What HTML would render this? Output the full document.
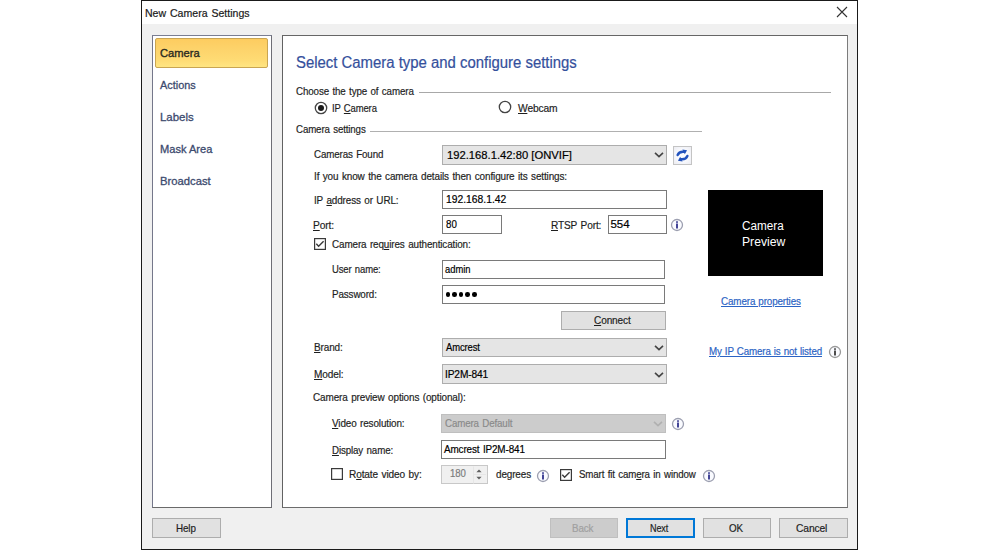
<!DOCTYPE html>
<html><head><meta charset="utf-8"><style>
html,body{margin:0;padding:0;width:1000px;height:550px;overflow:hidden;background:#fff;}
body{position:relative;font-family:"Liberation Sans",sans-serif;}
.t{position:absolute;white-space:nowrap;line-height:normal;transform-origin:0 0;}
.b{position:absolute;}
u{text-decoration:underline;}
</style></head><body>
<div class="b" style="left:141px;top:0px;width:717px;height:550px;background:#f0f0f0;border:1px solid #1a1a1a;box-sizing:border-box;"></div>
<div class="b" style="left:142px;top:1px;width:715px;height:23px;background:#fff;"></div>
<div class="t" style="left:145.40px;top:6.65px;font-size:11px;color:#1a1a1a;letter-spacing:0.000px;word-spacing:1.0px;transform:scaleX(0.9590);-webkit-text-stroke:0.2px #1a1a1a;">New Camera Settings</div>
<svg class="b" style="left:836px;top:6px" width="12" height="12" viewBox="0 0 12 12"><path d="M1 1 L11 11 M11 1 L1 11" stroke="#333" stroke-width="1.1"/></svg>
<div class="b" style="left:152px;top:35px;width:120px;height:473px;background:#fff;border:1px solid #6e7080;border-color:#7a7e92 #6e6e76 #6a6a6a #74778a;box-sizing:border-box;"></div>
<div class="b" style="left:155px;top:38px;width:113px;height:29.5px;background:linear-gradient(#fdcc60,#fdd46c 40%,#fedb74 75%,#ffe582);border:1px solid #c9a552;border-radius:2px;box-sizing:border-box;"></div>
<div class="t" style="left:159.75px;top:46.89px;font-size:11.5px;color:#2a2a20;letter-spacing:0.000px;word-spacing:0px;transform:scaleX(0.9697);-webkit-text-stroke:0.35px #2a2a20;">Camera</div>
<div class="t" style="left:159.75px;top:78.79px;font-size:11.5px;color:#3c4a6e;letter-spacing:0.000px;word-spacing:0px;transform:scaleX(0.9483);-webkit-text-stroke:0.3px #3c4a6e;">Actions</div>
<div class="t" style="left:160.00px;top:111.09px;font-size:11.5px;color:#3c4a6e;letter-spacing:0.000px;word-spacing:0px;transform:scaleX(0.9960);-webkit-text-stroke:0.3px #3c4a6e;">Labels</div>
<div class="t" style="left:160.00px;top:142.59px;font-size:11.5px;color:#3c4a6e;letter-spacing:0.000px;word-spacing:0px;transform:scaleX(0.9646);-webkit-text-stroke:0.3px #3c4a6e;">Mask Area</div>
<div class="t" style="left:160.00px;top:174.59px;font-size:11.5px;color:#3c4a6e;letter-spacing:0.000px;word-spacing:0px;transform:scaleX(0.9794);-webkit-text-stroke:0.3px #3c4a6e;">Broadcast</div>
<div class="b" style="left:282px;top:35px;width:566px;height:473px;background:#fff;border:1px solid #6e6e6e;border-color:#666 #7c7c7c #6c6c6c #626262;box-sizing:border-box;"></div>
<div class="t" style="left:295.90px;top:54.38px;font-size:15.6px;color:#34509c;letter-spacing:0.000px;word-spacing:0px;transform:scaleX(0.9556);-webkit-text-stroke:0.2px #34509c;">Select Camera type and configure settings</div>
<div class="t" style="left:295.90px;top:84.58px;font-size:11.4px;color:#1e1e1e;letter-spacing:-0.150px;word-spacing:1.0px;transform:scaleX(0.8590);-webkit-text-stroke:0.2px #1e1e1e;">Choose the type of camera</div>
<div class="b" style="left:419px;top:92px;width:412px;height:1px;background:#a8a8a8;"></div>
<svg class="b" style="left:313.7px;top:100.5px" width="14" height="14" viewBox="0 0 14 14"><circle cx="7" cy="7" r="5.7" fill="#fff" stroke="#444" stroke-width="1.3"/><circle cx="7" cy="7" r="3.0" fill="#1a1a1a"/></svg>
<div class="t" style="left:332.17px;top:101.68px;font-size:11.4px;color:#1e1e1e;letter-spacing:-0.150px;word-spacing:1.0px;transform:scaleX(0.8311);-webkit-text-stroke:0.2px #1e1e1e;">IP <u>C</u>amera</div>
<svg class="b" style="left:498.4px;top:100.4px" width="14" height="14" viewBox="0 0 14 14"><circle cx="7" cy="7" r="5.7" fill="#fff" stroke="#444" stroke-width="1.3"/></svg>
<div class="t" style="left:517.60px;top:101.68px;font-size:11.4px;color:#1e1e1e;letter-spacing:-0.150px;word-spacing:1.0px;transform:scaleX(0.9012);-webkit-text-stroke:0.2px #1e1e1e;"><u>W</u>ebcam</div>
<div class="t" style="left:295.70px;top:123.08px;font-size:11.4px;color:#1e1e1e;letter-spacing:-0.150px;word-spacing:1.0px;transform:scaleX(0.8522);-webkit-text-stroke:0.2px #1e1e1e;">Camera settings</div>
<div class="b" style="left:370px;top:131px;width:332px;height:1px;background:#b0b0b0;"></div>
<div class="t" style="left:313.60px;top:147.58px;font-size:11.4px;color:#1e1e1e;letter-spacing:-0.150px;word-spacing:1.0px;transform:scaleX(0.8580);-webkit-text-stroke:0.2px #1e1e1e;">Cameras Found</div>
<div class="b" style="left:442px;top:145px;width:225px;height:20px;background:#e5e5e5;border:1px solid #adadad;box-sizing:border-box;"></div>
<div class="t" style="left:446.50px;top:148.59px;font-size:11.5px;color:#000;letter-spacing:0.000px;word-spacing:0px;transform:scaleX(0.9768);-webkit-text-stroke:0.2px #000;">192.168.1.42:80 [ONVIF]</div>
<svg class="b" style="left:653.5px;top:152.3px" width="10" height="6" viewBox="0 0 10 6"><path d="M1 0.9 L5 4.7 L9 0.9" fill="none" stroke="#444" stroke-width="1.6"/></svg>
<div class="b" style="left:673px;top:146px;width:19px;height:19px;background:radial-gradient(circle,#fbfcff 40%,#ececf2);border:1px solid #c4c4c4;box-sizing:border-box;"></div>
<svg class="b" style="left:673px;top:146px" width="19" height="19" viewBox="0 0 19 19"><g transform="translate(9.5 9.5) scale(0.86) rotate(-10) translate(-9.5 -9.5)"><path d="M4 8 C5.5 5.5 9 4.6 12.2 5.6" fill="none" stroke="#2353bd" stroke-width="2.8" stroke-linecap="round"/><path d="M10.6 2.6 L15.8 4.4 L12.4 8.6 Z" fill="#2353bd"/><path d="M15 11 C13.5 13.5 10 14.4 6.8 13.4" fill="none" stroke="#2353bd" stroke-width="2.8" stroke-linecap="round"/><path d="M8.4 16.4 L3.2 14.6 L6.6 10.4 Z" fill="#2353bd"/></g></svg>
<div class="t" style="left:313.63px;top:169.58px;font-size:11.4px;color:#1e1e1e;letter-spacing:-0.150px;word-spacing:1.0px;transform:scaleX(0.8739);-webkit-text-stroke:0.2px #1e1e1e;">If you know the camera details then configure its settings:</div>
<div class="t" style="left:313.63px;top:193.68px;font-size:11.4px;color:#1e1e1e;letter-spacing:-0.150px;word-spacing:1.0px;transform:scaleX(0.8706);-webkit-text-stroke:0.2px #1e1e1e;">IP <u>a</u>ddress or URL:</div>
<div class="b" style="left:442px;top:190px;width:225px;height:19px;background:#fff;border:1px solid #7a7a7a;box-sizing:border-box;"></div>
<div class="t" style="left:445.50px;top:193.09px;font-size:11.5px;color:#000;letter-spacing:0.000px;word-spacing:0px;transform:scaleX(0.8989);-webkit-text-stroke:0.2px #000;">192.168.1.42</div>
<div class="t" style="left:313.00px;top:219.18px;font-size:11.4px;color:#1e1e1e;letter-spacing:-0.150px;word-spacing:1.0px;transform:scaleX(0.9017);-webkit-text-stroke:0.2px #1e1e1e;"><u>P</u>ort:</div>
<div class="b" style="left:442px;top:215px;width:60px;height:19px;background:#fff;border:1px solid #7a7a7a;box-sizing:border-box;"></div>
<div class="t" style="left:445.50px;top:218.09px;font-size:11.5px;color:#000;letter-spacing:0.000px;word-spacing:0px;transform:scaleX(0.8471);-webkit-text-stroke:0.2px #000;">80</div>
<div class="t" style="left:551.20px;top:219.18px;font-size:11.4px;color:#1e1e1e;letter-spacing:-0.150px;word-spacing:1.0px;transform:scaleX(0.8861);-webkit-text-stroke:0.2px #1e1e1e;"><u>R</u>TSP Port:</div>
<div class="b" style="left:608px;top:215px;width:59px;height:19px;background:#fff;border:1px solid #7a7a7a;box-sizing:border-box;"></div>
<div class="t" style="left:610.40px;top:218.09px;font-size:11.5px;color:#000;letter-spacing:0.000px;word-spacing:0px;-webkit-text-stroke:0.2px #000;">554</div>
<svg class="b" style="left:670px;top:218px" width="14" height="14" viewBox="0 0 14 14"><circle cx="7" cy="7" r="5.5" fill="#fafbff" stroke="#9c9fb0" stroke-width="1.3"/><rect x="6.1" y="3.3" width="1.8" height="1.5" fill="#2f318c"/><rect x="6.1" y="5.5" width="1.8" height="5" fill="#2f318c"/></svg>
<svg class="b" style="left:314px;top:238px" width="12" height="12" viewBox="0 0 12 12"><rect x="0.6" y="0.6" width="10.8" height="10.8" fill="#fff" stroke="#3a3a3a" stroke-width="1.2"/><path d="M2.3 5.8 L4.6 8.3 L9.6 3.2" fill="none" stroke="#3a3a3a" stroke-width="1.4"/></svg>
<div class="t" style="left:331.60px;top:237.88px;font-size:11.4px;color:#1e1e1e;letter-spacing:-0.150px;word-spacing:1.0px;transform:scaleX(0.8694);-webkit-text-stroke:0.2px #1e1e1e;">Camera req<u>u</u>ires authentication:</div>
<div class="t" style="left:331.60px;top:262.98px;font-size:11.4px;color:#1e1e1e;letter-spacing:-0.150px;word-spacing:1.0px;transform:scaleX(0.8328);-webkit-text-stroke:0.2px #1e1e1e;">User name:</div>
<div class="b" style="left:442px;top:260px;width:223px;height:19px;background:#fff;border:1px solid #7a7a7a;box-sizing:border-box;"></div>
<div class="t" style="left:444.50px;top:263.03px;font-size:10.8px;color:#000;letter-spacing:0.000px;word-spacing:1.0px;transform:scaleX(0.8673);-webkit-text-stroke:0.2px #000;">admin</div>
<div class="t" style="left:331.60px;top:287.98px;font-size:11.4px;color:#1e1e1e;letter-spacing:-0.150px;word-spacing:1.0px;transform:scaleX(0.8647);-webkit-text-stroke:0.2px #1e1e1e;">Password:</div>
<div class="b" style="left:442px;top:285px;width:223px;height:19px;background:#fff;border:1px solid #7a7a7a;box-sizing:border-box;"></div>
<div class="b" style="left:445.70px;top:292.3px;width:4.7px;height:4.7px;border-radius:50%;background:#000"></div>
<div class="b" style="left:452.25px;top:292.3px;width:4.7px;height:4.7px;border-radius:50%;background:#000"></div>
<div class="b" style="left:458.80px;top:292.3px;width:4.7px;height:4.7px;border-radius:50%;background:#000"></div>
<div class="b" style="left:465.35px;top:292.3px;width:4.7px;height:4.7px;border-radius:50%;background:#000"></div>
<div class="b" style="left:471.90px;top:292.3px;width:4.7px;height:4.7px;border-radius:50%;background:#000"></div>
<div class="b" style="left:561px;top:311px;width:105px;height:19px;background:#e1e1e1;border:1px solid #adadad;box-sizing:border-box;"></div>
<div class="t" style="left:593.75px;top:314.18px;font-size:11.4px;color:#1e1e1e;letter-spacing:-0.150px;word-spacing:1.0px;transform:scaleX(0.8852);-webkit-text-stroke:0.2px #1e1e1e;"><u>C</u>onnect</div>
<div class="t" style="left:314.00px;top:341.08px;font-size:11.4px;color:#1e1e1e;letter-spacing:-0.150px;word-spacing:1.0px;transform:scaleX(0.8761);-webkit-text-stroke:0.2px #1e1e1e;"><u>B</u>rand:</div>
<div class="b" style="left:442px;top:338px;width:225px;height:19px;background:#e5e5e5;border:1px solid #adadad;box-sizing:border-box;"></div>
<div class="t" style="left:446.00px;top:341.08px;font-size:11.4px;color:#000;letter-spacing:-0.150px;word-spacing:1.0px;transform:scaleX(0.8296);-webkit-text-stroke:0.2px #000;">Amcrest</div>
<svg class="b" style="left:653.5px;top:345.4px" width="10" height="6" viewBox="0 0 10 6"><path d="M1 0.9 L5 4.7 L9 0.9" fill="none" stroke="#444" stroke-width="1.6"/></svg>
<div class="t" style="left:314.00px;top:367.68px;font-size:11.4px;color:#1e1e1e;letter-spacing:-0.150px;word-spacing:1.0px;transform:scaleX(0.8836);-webkit-text-stroke:0.2px #1e1e1e;"><u>M</u>odel:</div>
<div class="b" style="left:442px;top:364px;width:225px;height:20px;background:#e5e5e5;border:1px solid #adadad;box-sizing:border-box;"></div>
<div class="t" style="left:445.11px;top:367.68px;font-size:11.4px;color:#000;letter-spacing:-0.150px;word-spacing:1.0px;transform:scaleX(0.8936);-webkit-text-stroke:0.2px #000;">IP2M-841</div>
<svg class="b" style="left:653.5px;top:372px" width="10" height="6" viewBox="0 0 10 6"><path d="M1 0.9 L5 4.7 L9 0.9" fill="none" stroke="#444" stroke-width="1.6"/></svg>
<div class="t" style="left:313.40px;top:390.68px;font-size:11.4px;color:#1e1e1e;letter-spacing:-0.150px;word-spacing:1.0px;transform:scaleX(0.8744);-webkit-text-stroke:0.2px #1e1e1e;">Camera preview options (optional):</div>
<div class="t" style="left:332.00px;top:416.68px;font-size:11.4px;color:#1e1e1e;letter-spacing:-0.150px;word-spacing:1.0px;transform:scaleX(0.8714);-webkit-text-stroke:0.2px #1e1e1e;"><u>V</u>ideo resolution:</div>
<div class="b" style="left:441px;top:414px;width:225px;height:19px;background:#cccccc;border:1px solid #bfbfbf;box-sizing:border-box;"></div>
<div class="t" style="left:444.60px;top:416.68px;font-size:11.4px;color:#8a8a8a;letter-spacing:-0.150px;word-spacing:1.0px;transform:scaleX(0.8550);-webkit-text-stroke:0.2px #8a8a8a;">Camera Default</div>
<svg class="b" style="left:653px;top:420.5px" width="10" height="6" viewBox="0 0 10 6"><path d="M1 0.9 L5 4.7 L9 0.9" fill="none" stroke="#b0b0b0" stroke-width="1.6"/></svg>
<svg class="b" style="left:670.5px;top:416.7px" width="14" height="14" viewBox="0 0 14 14"><circle cx="7" cy="7" r="5.5" fill="#fafbff" stroke="#9c9fb0" stroke-width="1.3"/><rect x="6.1" y="3.3" width="1.8" height="1.5" fill="#2f318c"/><rect x="6.1" y="5.5" width="1.8" height="5" fill="#2f318c"/></svg>
<div class="t" style="left:332.00px;top:443.68px;font-size:11.4px;color:#1e1e1e;letter-spacing:-0.150px;word-spacing:1.0px;transform:scaleX(0.8567);-webkit-text-stroke:0.2px #1e1e1e;"><u>D</u>isplay name:</div>
<div class="b" style="left:441px;top:440px;width:225px;height:19px;background:#fff;border:1px solid #7a7a7a;box-sizing:border-box;"></div>
<div class="t" style="left:444.30px;top:443.18px;font-size:11.4px;color:#000;letter-spacing:-0.150px;word-spacing:1.0px;transform:scaleX(0.8692);-webkit-text-stroke:0.2px #000;">Amcrest IP2M-841</div>
<svg class="b" style="left:331px;top:468px" width="12" height="12" viewBox="0 0 12 12"><rect x="0.6" y="0.6" width="10.8" height="10.8" fill="#fff" stroke="#3a3a3a" stroke-width="1.2"/></svg>
<div class="t" style="left:349.00px;top:467.88px;font-size:11.4px;color:#1e1e1e;letter-spacing:-0.150px;word-spacing:1.0px;transform:scaleX(0.8864);-webkit-text-stroke:0.2px #1e1e1e;">R<u>o</u>tate video by:</div>
<div class="b" style="left:441px;top:465px;width:47px;height:19px;background:#f0f0f0;border:1px solid #c8c8c8;box-sizing:border-box;"></div>
<div class="t" style="left:449.50px;top:467.48px;font-size:11.4px;color:#7c7c7c;letter-spacing:-0.150px;word-spacing:1.0px;transform:scaleX(0.8438);-webkit-text-stroke:0.2px #7c7c7c;">180</div>
<svg class="b" style="left:472px;top:466px" width="15" height="18" viewBox="0 0 15 18"><path d="M1.5 0.5 V17.5 M1.5 8.5 H14" stroke="#e6e6e6" stroke-width="1"/><path d="M4.4 6.2 L7 3.4 L9.6 6.2 Z" fill="#606060"/><path d="M4.4 10.8 L7 13.6 L9.6 10.8 Z" fill="#606060"/></svg>
<div class="t" style="left:496.20px;top:467.68px;font-size:11.4px;color:#1e1e1e;letter-spacing:-0.150px;word-spacing:1.0px;transform:scaleX(0.8726);-webkit-text-stroke:0.2px #1e1e1e;">degrees</div>
<svg class="b" style="left:536px;top:468.6px" width="14" height="14" viewBox="0 0 14 14"><circle cx="7" cy="7" r="5.5" fill="#fafbff" stroke="#9c9fb0" stroke-width="1.3"/><rect x="6.1" y="3.3" width="1.8" height="1.5" fill="#2f318c"/><rect x="6.1" y="5.5" width="1.8" height="5" fill="#2f318c"/></svg>
<svg class="b" style="left:560px;top:469px" width="12" height="12" viewBox="0 0 12 12"><rect x="0.6" y="0.6" width="10.8" height="10.8" fill="#fff" stroke="#3a3a3a" stroke-width="1.2"/><path d="M2.3 5.8 L4.6 8.3 L9.6 3.2" fill="none" stroke="#3a3a3a" stroke-width="1.4"/></svg>
<div class="t" style="left:578.80px;top:468.38px;font-size:11.4px;color:#1e1e1e;letter-spacing:-0.150px;word-spacing:1.0px;transform:scaleX(0.8522);-webkit-text-stroke:0.2px #1e1e1e;">Smart fit cam<u>e</u>ra in window</div>
<svg class="b" style="left:702px;top:469.2px" width="14" height="14" viewBox="0 0 14 14"><circle cx="7" cy="7" r="5.5" fill="#fafbff" stroke="#9c9fb0" stroke-width="1.3"/><rect x="6.1" y="3.3" width="1.8" height="1.5" fill="#2f318c"/><rect x="6.1" y="5.5" width="1.8" height="5" fill="#2f318c"/></svg>
<div class="b" style="left:708px;top:190px;width:115px;height:86px;background:#000;"></div>
<div class="t" style="left:742.40px;top:218.74px;font-size:12px;color:#fff;letter-spacing:0.000px;word-spacing:0px;transform:scaleX(0.9766);">Camera</div>
<div class="t" style="left:742.40px;top:234.74px;font-size:12px;color:#fff;letter-spacing:0.000px;word-spacing:0px;transform:scaleX(1.0136);">Preview</div>
<div class="t" style="left:721.00px;top:294.98px;font-size:11.4px;color:#2b63c4;letter-spacing:-0.150px;word-spacing:0.6px;transform:scaleX(0.8639);text-decoration:underline;-webkit-text-stroke:0.2px #2b63c4;">Camera properties</div>
<div class="t" style="left:708.70px;top:345.18px;font-size:11.4px;color:#2b63c4;letter-spacing:-0.150px;word-spacing:0.6px;transform:scaleX(0.8570);text-decoration:underline;-webkit-text-stroke:0.2px #2b63c4;">My IP Camera is not listed</div>
<svg class="b" style="left:828px;top:344.7px" width="14" height="14" viewBox="0 0 14 14"><circle cx="7" cy="7" r="5.5" fill="#fafbff" stroke="#9a9a9a" stroke-width="1.3"/><rect x="6.1" y="3.3" width="1.8" height="1.5" fill="#3a3a3a"/><rect x="6.1" y="5.5" width="1.8" height="5" fill="#3a3a3a"/></svg>
<div class="b" style="left:152px;top:518px;width:69px;height:20px;background:#e1e1e1;border:1px solid #adadad;box-sizing:border-box;"></div>
<div class="t" style="left:176.00px;top:521.98px;font-size:11.4px;color:#1e1e1e;letter-spacing:-0.150px;word-spacing:1.0px;transform:scaleX(0.8657);-webkit-text-stroke:0.2px #1e1e1e;">Help</div>
<div class="b" style="left:550px;top:518px;width:68px;height:20px;background:#cccccc;border:1px solid #bfbfbf;box-sizing:border-box;"></div>
<div class="t" style="left:572.00px;top:522.18px;font-size:11.4px;color:#a0a0a0;letter-spacing:-0.150px;word-spacing:1.0px;transform:scaleX(0.8579);-webkit-text-stroke:0.2px #a0a0a0;">Back</div>
<div class="b" style="left:626px;top:518px;width:69px;height:20px;background:#e1e1e1;border:2px solid #0078d7;box-sizing:border-box;"></div>
<div class="t" style="left:650.40px;top:522.18px;font-size:11.4px;color:#1e1e1e;letter-spacing:-0.150px;word-spacing:1.0px;transform:scaleX(0.7939);-webkit-text-stroke:0.2px #1e1e1e;">Next</div>
<div class="b" style="left:703px;top:518px;width:68px;height:20px;background:#e1e1e1;border:1px solid #adadad;box-sizing:border-box;"></div>
<div class="t" style="left:728.70px;top:522.38px;font-size:11.4px;color:#1e1e1e;letter-spacing:-0.150px;word-spacing:1.0px;transform:scaleX(0.8618);-webkit-text-stroke:0.2px #1e1e1e;">OK</div>
<div class="b" style="left:779px;top:518px;width:69px;height:20px;background:#e1e1e1;border:1px solid #adadad;box-sizing:border-box;"></div>
<div class="t" style="left:796.20px;top:522.38px;font-size:11.4px;color:#1e1e1e;letter-spacing:-0.150px;word-spacing:1.0px;transform:scaleX(0.9041);-webkit-text-stroke:0.2px #1e1e1e;">Cancel</div>
</body></html>
